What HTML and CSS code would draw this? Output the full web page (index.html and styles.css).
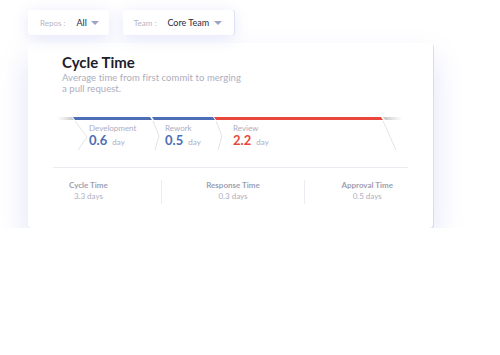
FILE: index.html
```html
<!DOCTYPE html>
<html lang="en">
<head>
    <meta charset="UTF-8">
    <meta name="viewport" content="width=device-width, initial-scale=1.0">
    <title>Cycle Time</title>
    <link rel="stylesheet" href="styles.css">
</head>
<body>
    <div class="page">
        <!-- Filters -->
        <div class="filters">
            <div class="filter">
                <span class="filter-label">Repos :</span>
                <span class="filter-value">All</span>
                <span class="caret"></span>
            </div>
            <div class="filter filter-edge">
                <span class="filter-label">Team :</span>
                <span class="filter-value">Core Team</span>
                <span class="caret"></span>
            </div>
        </div>

        <!-- Cycle time card -->
        <div class="card">
            <div class="card-head">
                <h2>Cycle Time</h2>
                <p>Average time from first commit to merging<br>a pull request.</p>
            </div>

            <div class="stages">
                <svg class="stage-lines" width="405" height="36" viewBox="0 0 405 36">
                    <defs>
                        <linearGradient id="fadeL" x1="0" x2="1" y1="0" y2="0">
                            <stop offset="0" stop-color="#d2d2d6" stop-opacity="0"/>
                            <stop offset="1" stop-color="#c4c4c9"/>
                        </linearGradient>
                        <linearGradient id="fadeR" x1="0" x2="1" y1="0" y2="0">
                            <stop offset="0" stop-color="#c4c4c9"/>
                            <stop offset="1" stop-color="#d2d2d6" stop-opacity="0"/>
                        </linearGradient>
                    </defs>
                    <polygon points="29,1 44,1 46,4 29,4" fill="url(#fadeL)"/>
                    <polygon points="45,1 122,1 124,4 47,4" fill="#4d6db5"/>
                    <polygon points="124,1 185,1 187,4 126,4" fill="#4d6db5"/>
                    <polygon points="186,1 353,1 355,4 188,4" fill="#e9473b"/>
                    <polygon points="355,1 375,1 375,4 357,4" fill="url(#fadeR)"/>
                    <g fill="none" stroke="#e3e4ea" stroke-width="1">
                        <polyline points="47,5 59,21 50,34"/>
                        <polyline points="125,5 131,20 127,34"/>
                        <polyline points="188,5 194,20 190,34"/>
                        <line x1="355" y1="5" x2="368" y2="34"/>
                    </g>
                </svg>
                <div class="stage-row">
                    <div class="stage stage-dev">
                        <span class="stage-name">Development</span>
                        <span class="stage-value blue">0.6 <small>day</small></span>
                    </div>
                    <div class="stage stage-rework">
                        <span class="stage-name">Rework</span>
                        <span class="stage-value blue">0.5 <small>day</small></span>
                    </div>
                    <div class="stage">
                        <span class="stage-name">Review</span>
                        <span class="stage-value red">2.2 <small>day</small></span>
                    </div>
                </div>
            </div>

            <div class="divider"></div>

            <div class="stats">
                <div class="stat stat-left">
                    <div class="stat-box">
                        <div class="stat-label">Cycle Time</div>
                        <div class="stat-value">3.3 days</div>
                    </div>
                </div>
                <div class="stat stat-mid">
                    <div class="stat-box">
                        <div class="stat-label">Response Time</div>
                        <div class="stat-value">0.3 days</div>
                    </div>
                </div>
                <div class="stat stat-right">
                    <div class="stat-box">
                        <div class="stat-label">Approval Time</div>
                        <div class="stat-value">0.5 days</div>
                    </div>
                </div>
            </div>
        </div>
    </div>
</body>
</html>
```

FILE: styles.css
```css
:root {
    --title: #1d1d2b;
    --muted: #acaec0;
    --blue: #4d6db5;
    --red: #e9473b;
    --line: #ececf2;
}

* {
    margin: 0;
    padding: 0;
    box-sizing: border-box;
    font-family: 'Lato', 'Open Sans', sans-serif;
}

body {
    background: #ffffff;
    color: var(--title);
}

.page {
    padding: 10px 0 0 28px;
}

/* Filters */
.filters {
    display: flex;
    gap: 14px;
}

.filter {
    display: flex;
    align-items: center;
    height: 25px;
    padding: 0 10px 0 12px;
    background: #fff;
    border-radius: 3px;
    box-shadow: 0 3px 16px rgba(120, 128, 225, 0.2);
}

.filter-edge {
    padding-left: 11px;
    padding-right: 12px;
    box-shadow: 1px 0 0 #dfe1f4, 0 3px 16px rgba(120, 128, 225, 0.2);
}

.filter-label {
    font-size: 8px;
    color: #b4b6c6;
    margin-right: 11px;
}

.filter-value {
    font-size: 9px;
    color: #2a2a3a;
    margin-right: 4px;
}

.filter-edge .filter-value {
    margin-right: 5px;
}

.caret {
    width: 0;
    height: 0;
    border-left: 4px solid transparent;
    border-right: 4px solid transparent;
    border-top: 4px solid #9ea2c4;
}

/* Card */
.card {
    width: 405px;
    height: 185px;
    margin-top: 8px;
    background: #fff;
    border-radius: 4px;
    box-shadow: 1px 1px 0 #d9dcf2, 0 16px 30px rgba(110, 120, 220, 0.22);
}

.card-head {
    padding: 10px 0 0 34px;
}

.card-head h2 {
    font-size: 15px;
    line-height: 18px;
    font-weight: 700;
    color: var(--title);
}

.card-head p {
    margin-top: 1px;
    font-size: 9.5px;
    line-height: 11px;
    color: var(--muted);
    letter-spacing: 0.05px;
}

/* Stages */
.stages {
    position: relative;
    height: 36px;
    margin-top: 22px;
}

.stage-lines {
    position: absolute;
    top: 0;
    left: 0;
}

.stage-row {
    position: relative;
    display: flex;
    padding: 7px 0 0 61px;
}

.stage {
    display: flex;
    flex-direction: column;
}

.stage-dev { width: 76px; }
.stage-rework { width: 68px; }

.stage-name {
    font-size: 8px;
    line-height: 10px;
    color: var(--muted);
}

.stage-value {
    font-size: 13px;
    line-height: 14px;
    font-weight: 700;
}

.stage-value small {
    font-size: 8px;
    font-weight: 400;
    color: var(--muted);
    margin-left: 2px;
}

.blue { color: var(--blue); }
.red { color: var(--red); }

.divider {
    height: 1px;
    margin: 15px 25px 0;
    background: var(--line);
}

/* Summary stats */
.stats {
    display: grid;
    grid-template-columns: 108px 144px 103px;
    margin: 12px 0 0 25px;
}

.stat {
    height: 24px;
}

.stat-mid {
    text-align: center;
    border-left: 1px solid var(--line);
    border-right: 1px solid var(--line);
}

.stat-left { padding-left: 16px; }
.stat-right { text-align: right; padding-right: 15px; }

.stat-box {
    display: inline-block;
    text-align: center;
}

.stat-label {
    font-size: 8px;
    line-height: 10px;
    font-weight: 700;
    color: #9d9fb2;
}

.stat-value {
    margin-top: 1px;
    font-size: 8px;
    line-height: 10px;
    color: var(--muted);
}
```
